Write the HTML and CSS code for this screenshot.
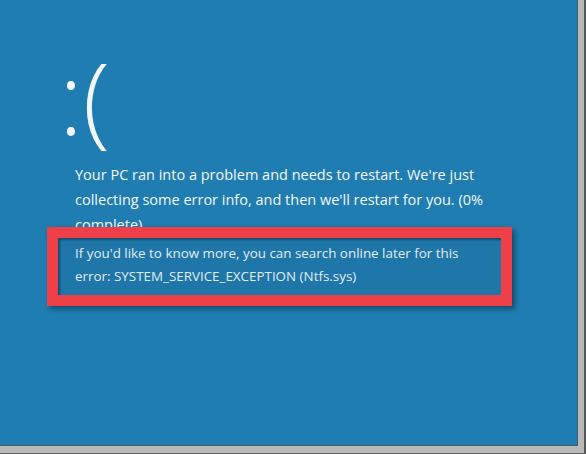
FILE: index.html
```html
<!DOCTYPE html>
<html>
<head>
<meta charset="utf-8">
<link rel="stylesheet" href="styles.css">
</head>
<body>
<div class="frame">
  <div class="screen">
    <div class="face">:(</div>
    <p class="msg">Your PC ran into a problem and needs to restart. We're just collecting some error info, and then we'll restart for you. (0% complete)</p>
    <div class="highlight">
      <p class="info">If you'd like to know more, you can search online later for this error: SYSTEM_SERVICE_EXCEPTION (Ntfs.sys)</p>
    </div>
  </div>
</div>
</body>
</html>
```

FILE: styles.css
```css
html, body {
  margin: 0;
  padding: 0;
}
body {
  width: 586px;
  height: 454px;
  overflow: hidden;
  background: #8e8e8e;
}
.frame {
  width: 586px;
  height: 454px;
  box-sizing: border-box;
  background: #b9b9b9;
  border-right: 2px solid #555;
  border-bottom: 1px solid #666;
}
.screen {
  width: 578px;
  height: 446px;
  box-sizing: border-box;
  background: #1f7db1;
  border-right: 1px solid #4a5a66;
  border-bottom: 1px solid #4a5a66;
  padding: 52px 0 0 75px;
  font-family: "Open Sans", "Noto Sans", sans-serif;
  color: #f3f7fa;
  overflow: hidden;
}
.face {
  font-family: "Open Sans", sans-serif;
  font-weight: 300;
  font-size: 100px;
  line-height: 88px;
  height: 110px;
  margin-left: -16px;
}
.msg {
  margin: 0;
  width: 420px;
  font-size: 14.5px;
  line-height: 25px;
}
.highlight {
  margin: -10px 0 0 -28px;
  width: 465px;
  height: 79px;
  box-sizing: border-box;
  border: 11px solid #ef3f48;
  background: #1e76a9;
  box-shadow: 3px 3px 5px rgba(0, 0, 0, 0.4), inset 2px 2px 2px rgba(0, 0, 0, 0.35);
  padding: 4px 0 0 17px;
  position: relative;
}
.info {
  margin: 0;
  width: 420px;
  font-size: 13.4px;
  line-height: 23px;
  color: #e2ecf3;
}
```
